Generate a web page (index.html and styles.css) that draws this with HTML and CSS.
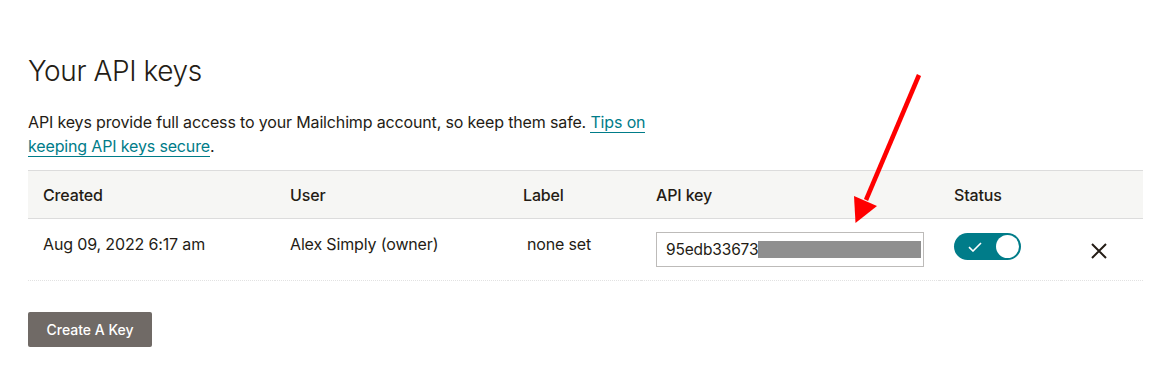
FILE: index.html
```html
<!DOCTYPE html>
<html lang="en">
<head>
    <meta charset="UTF-8">
    <title>Your API keys</title>
    <link rel="stylesheet" href="styles.css">
</head>
<body>
    <div class="page">
        <h1 class="heading">Your API keys</h1>
        <p class="intro">
            API keys provide full access to your Mailchimp account, so keep them safe. <a href="#">Tips on<br>keeping API keys secure</a>.
        </p>

        <table class="keys">
            <thead>
                <tr>
                    <th class="col-created">Created</th>
                    <th class="col-user">User</th>
                    <th class="col-label">Label</th>
                    <th class="col-key">API key</th>
                    <th class="col-status">Status</th>
                    <th class="col-remove"></th>
                </tr>
            </thead>
            <tbody>
                <tr>
                    <td>Aug 09, 2022 6:17 am</td>
                    <td>Alex Simply (owner)</td>
                    <td class="label-cell">none set</td>
                    <td>
                        <div class="key-input">
                            <span class="key-text">95edb33673</span>
                            <span class="key-mask"></span>
                        </div>
                    </td>
                    <td>
                        <div class="toggle">
                            <svg class="toggle-check" width="14" height="10" viewBox="0 0 14 10">
                                <path d="M1 5.2 L5 9 L13 1" fill="none" stroke="#fff" stroke-width="1.6"/>
                            </svg>
                            <span class="toggle-knob"></span>
                        </div>
                    </td>
                    <td class="remove-cell">
                        <svg width="16" height="16" viewBox="0 0 16 16">
                            <path d="M1 1 L15 15 M15 1 L1 15" stroke="#241c15" stroke-width="2"/>
                        </svg>
                    </td>
                </tr>
            </tbody>
        </table>

        <button class="create-btn">Create A Key</button>
    </div>

    <!-- annotation arrow drawn over the screenshot -->
    <svg class="arrow" width="1167" height="378" viewBox="0 0 1167 378">
        <line x1="919" y1="75" x2="866" y2="200" stroke="#ff0000" stroke-width="4.5"/>
        <polygon points="855.5,223 854,196 877,206" fill="#ff0000"/>
    </svg>
</body>
</html>
```

FILE: styles.css
```css
body {
    margin: 0;
    background: #fff;
    font-family: Inter, "Liberation Sans", sans-serif;
    color: #241c15;
}

.page {
    padding: 53px 24px 0 28px;
    position: relative;
}

.heading {
    font-size: 28px;
    font-weight: 300;
    line-height: 36px;
    letter-spacing: -0.4px;
    margin: 0 0 21px;
}

.intro {
    font-size: 16px;
    line-height: 24px;
    letter-spacing: -0.15px;
    margin: 0 0 12px;
}

.intro a {
    color: #007c89;
    text-decoration: none;
    border-bottom: 1px solid #007c89;
}

.keys {
    width: 1115px;
    border-collapse: collapse;
    font-size: 16px;
    letter-spacing: -0.15px;
}

.keys thead tr {
    background: #f6f6f4;
    border-top: 1px solid #dcdcdc;
    border-bottom: 1px solid #dcdcdc;
}

.keys th {
    text-align: left;
    font-weight: 500;
    height: 47px;
    padding: 0 15px;
    line-height: 24px;
}

.keys td {
    vertical-align: top;
    padding: 13px 15px;
    line-height: 24px;
    border-bottom: 1px dotted #e2e2e2;
}

.col-created { width: 217px; }
.col-user { width: 203px; }
.col-label { width: 103px; }
.col-key { width: 267px; }
.col-status { width: 92px; }

.label-cell {
    padding-left: 19px !important;
}

.key-input {
    box-sizing: border-box;
    width: 268px;
    height: 35px;
    border: 1px solid #bdbbb9;
    display: flex;
    align-items: center;
    padding: 0 2px 0 9px;
    font-size: 15.5px;
}

.key-mask {
    flex: 1;
    height: 17px;
    background: #8f8f8f;
}

.toggle {
    box-sizing: border-box;
    width: 67px;
    height: 27px;
    margin-top: 1px;
    border-radius: 14px;
    background: #007c89;
    display: flex;
    align-items: center;
    justify-content: space-between;
    padding: 0 2px 0 14px;
}

.toggle-knob {
    width: 23px;
    height: 23px;
    border-radius: 50%;
    background: #fff;
}

.remove-cell {
    padding-left: 30px !important;
    padding-top: 22px !important;
}

.create-btn {
    margin-top: 31px;
    background: #706a66;
    color: #fff;
    border: none;
    border-radius: 2px;
    font-family: Inter, "Liberation Sans", sans-serif;
    font-size: 14px;
    font-weight: 500;
    width: 124px;
    height: 35px;
    padding: 0;
}

.arrow {
    position: absolute;
    left: 0;
    top: 0;
    pointer-events: none;
}
```
